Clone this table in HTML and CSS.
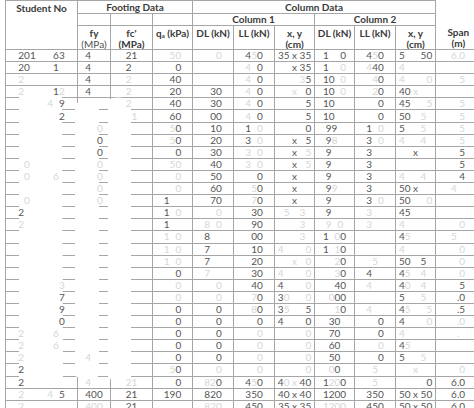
FILE: index.html
```html
<!DOCTYPE html>
<html>
<head>
<meta charset="utf-8">
<link rel="stylesheet" href="styles.css">
</head>
<body>
<div class="page">
<table class="sheet">
<colgroup>
<col class="w-a"><col class="w-b"><col class="w-c"><col class="w-d"><col class="w-e"><col class="w-f"><col class="w-g"><col class="w-h"><col class="w-i"><col class="w-j"><col class="w-k">
</colgroup>
<thead>
<tr class="h1">
<th rowspan="3" class="student">Student No</th>
<th colspan="3">Footing Data</th>
<th colspan="6">Column Data</th>
<th rowspan="3" class="span-h">Span<br>(m)</th>
</tr>
<tr class="h2">
<th></th><th></th><th></th>
<th colspan="3">Column 1</th>
<th colspan="3">Column 2</th>
</tr>
<tr class="h3">
<th>fy<br><span class="light">(MPa)</span></th>
<th>fc'<br>(MPa)</th>
<th>q<sub>a</sub> (kPa)</th>
<th>DL (kN)</th>
<th>LL (kN)</th>
<th>x, y<br>(cm)</th>
<th>DL (kN)</th>
<th>LL (kN)</th>
<th>x, y<br>(cm)</th>
</tr>
</thead>
<tbody>
<tr><td>201<i>504</i>63</td><td>4<i>00</i></td><td>21</td><td><i>1</i><s>50</s></td><td><i>82</i><s>0</s></td><td>4<s>5</s>0</td><td>35 x 35</td><td>1<i>20</i>0</td><td>4<s>5</s>0</td><td>5<i>0 x </i>50</td><td><s>6.0</s></td></tr>
<tr><td>20<i>1504</i>1<i>2</i></td><td>4<i>00</i></td><td>2<i>1</i></td><td><i>15</i>0</td><td></td><td><s>4</s><i>5</i>0</td><td><i>35 </i>x 35</td><td>1<i>20</i><s>0</s></td><td><s>4</s>40</td><td><s>4</s><i>0 x 40</i></td><td></td></tr>
<tr><td><s>2</s><i>0150462</i></td><td>4<i>00</i></td><td><s>2</s><i>1</i></td><td><i>1</i>40</td><td></td><td><s>4</s><i>5</i>0</td><td><i>35 x </i><s>3</s>5</td><td>10<i>0</i><s>0</s></td><td><i>4</i><s>4</s>0</td><td><s>4</s><i>0 x 4</i><s>0</s></td><td><i>5.</i><s>5</s></td></tr>
<tr><td><s>2</s><i>01504</i>1<s>2</s></td><td>4<i>00</i></td><td><s>2</s><i>1</i></td><td><i>1</i>20</td><td><i>9</i>30</td><td><s>4</s><i>5</i>0</td><td><i>40 </i><s>x</s><i> 4</i>0</td><td>10<i>0</i><s>0</s></td><td><i>4</i><s>2</s>0</td><td>40 <s>x</s><i> 40</i></td><td></td></tr>
<tr><td><i>20150</i><s>4</s><i>6</i>9</td><td></td><td><s>2</s><i>1</i></td><td><i>1</i>40</td><td><i>9</i>30</td><td><s>4</s><i>5</i>0</td><td><i>35 x 3</i>5</td><td>10<i>00</i></td><td><i>45</i>0</td><td>45<i> x 4</i><s>5</s></td><td><i>5.</i><s>5</s></td></tr>
<tr><td><i>2015046</i>2</td><td></td><td><i>2</i><s>1</s></td><td><i>1</i>60</td><td><i>1</i>00</td><td><s>4</s><i>5</i>0</td><td><i>35 x 3</i>5</td><td>10<i>00</i></td><td><i>45</i>0</td><td>50<i> x </i><s>5</s><i>0</i></td><td><i>5.</i><s>5</s></td></tr>
<tr><td></td><td><i>40</i><s>0</s></td><td></td><td><i>1</i><s>5</s>0</td><td><i>9</i>10</td><td>1<i>5</i><s>0</s></td><td><i>35 x 3</i>0</td><td>99<i>0</i></td><td>1<i>5</i><s>0</s></td><td>5<i>0 x </i><s>5</s><i>0</i></td><td><i>5.</i><s>5</s></td></tr>
<tr><td></td><td><i>40</i>0</td><td></td><td><i>1</i><s>5</s>0</td><td><i>8</i>20</td><td>3<i>5</i><s>0</s></td><td><i>35 </i>x<i> 3</i>5</td><td>9<s>8</s><i>0</i></td><td>3<i>5</i><s>0</s></td><td><s>4</s><i>0 x </i><s>4</s><i>0</i></td><td><i>5.</i><s>5</s></td></tr>
<tr><td></td><td><i>40</i>0</td><td></td><td><i>15</i>0</td><td><i>8</i>30</td><td><s>3</s><i>5</i><s>0</s></td><td><i>35 </i>x<i> 3</i><s>5</s></td><td>9<i>80</i></td><td>3<i>50</i></td><td><i>40 </i>x<i> 40</i></td><td><i>5.</i>5</td></tr>
<tr><td><i>2</i><s>0</s><i>150463</i></td><td><i>40</i><s>0</s></td><td></td><td><i>1</i><s>50</s></td><td><i>8</i>40</td><td><s>3</s><i>5</i><s>0</s></td><td><i>35 </i>x<i> 3</i><s>5</s></td><td>9<i>80</i></td><td>3<i>50</i></td><td></td><td><i>5.</i>5</td></tr>
<tr><td><i>2</i><s>0</s><i>1504</i><s>6</s><i>3</i></td><td><i>40</i><s>0</s></td><td></td><td><i>15</i><s>0</s></td><td><i>8</i>50</td><td><i>35</i>0</td><td><i>35 </i>x<i> 35</i></td><td>9<i>80</i></td><td>3<i>50</i></td><td><s>4</s><i>0 x </i><s>4</s><i>0</i></td><td><i>5.</i>4</td></tr>
<tr><td></td><td><i>40</i><s>0</s></td><td></td><td><i>15</i><s>0</s></td><td><i>8</i>60</td><td><i>3</i><s>5</s>0</td><td><i>35 </i>x<i> 35</i></td><td>9<s>9</s><i>0</i></td><td>3<i>50</i></td><td>50 x<i> 50</i></td><td><s>4</s><i>.5</i></td></tr>
<tr><td><i>2</i><s>0</s><i>150463</i></td><td><i>40</i><s>0</s></td><td></td><td>1<i>50</i></td><td><i>8</i>70</td><td><i>3</i><s>7</s>0</td><td><i>35 </i>x<i> 35</i></td><td>9<i>90</i></td><td>3<i>5</i><s>0</s></td><td>50<i> x 5</i><s>0</s></td><td></td></tr>
<tr><td>2<i>0150463</i></td><td></td><td></td><td>1<i>5</i><s>0</s></td><td><i>88</i><s>0</s></td><td><i>4</i>30</td><td><i>3</i><s>5</s><i> x </i><s>3</s><i>5</i></td><td>9<i>90</i></td><td><s>3</s><i>50</i></td><td>45<i> x 45</i></td><td></td></tr>
<tr><td><s>2</s><i>0150463</i></td><td></td><td></td><td>1<i>50</i></td><td><s>8</s><i>9</i><s>0</s></td><td><i>4</i>90</td><td><i>35 x </i><s>3</s><i>5</i></td><td><s>9</s><i>9</i><s>0</s></td><td><s>3</s><i>50</i></td><td><s>4</s><i>5 x 45</i></td><td><i>5.</i><s>0</s></td></tr>
<tr><td></td><td></td><td></td><td><s>1</s><i>5</i><s>0</s></td><td>8<i>00</i></td><td><i>5</i>00</td><td><i>35 x </i><s>3</s><i>5</i></td><td>1<i>0</i><s>0</s>0</td><td></td><td>4<s>5</s><i> x 45</i></td><td><s>5</s><i>.5</i></td></tr>
<tr><td></td><td></td><td></td><td><s>1</s><i>5</i><s>0</s></td><td>7<i>00</i></td><td><i>5</i>10</td><td><s>4</s><i>0 x 4</i><s>0</s></td><td>1<i>0</i><s>1</s>0</td><td></td><td><s>4</s><i>0 x 40</i></td><td><i>5.</i><s>0</s></td></tr>
<tr><td></td><td></td><td></td><td><s>1</s><i>5</i><s>0</s></td><td>7<i>10</i></td><td><i>5</i>20</td><td><i>40 </i><s>x</s><i> 4</i><s>0</s></td><td><i>10</i><s>2</s>0</td><td><i>3</i><s>5</s><i>0</i></td><td>50<i> x </i>5<i>0</i></td><td><i>5.</i><s>0</s></td></tr>
<tr><td></td><td></td><td></td><td><i>15</i>0</td><td><s>7</s><i>20</i></td><td><i>5</i>30</td><td><s>4</s><i>0 x 4</i><s>0</s></td><td><i>10</i><s>3</s>0</td><td>4<i>50</i></td><td>4<s>5</s><i> x </i><s>4</s><i>5</i></td><td><i>5.</i><s>0</s></td></tr>
<tr><td><i>2015046</i><s>3</s></td><td></td><td></td><td><i>15</i><s>0</s></td><td><i>73</i><s>0</s></td><td><i>5</i>40</td><td>4<i>0 x 4</i><s>0</s></td><td><i>10</i>40</td><td><s>4</s><i>50</i></td><td>4<s>0</s><i> x </i><s>4</s><i>0</i></td><td><i>5.</i>5</td></tr>
<tr><td><i>2015046</i>7</td><td></td><td></td><td><i>15</i><s>0</s></td><td><i>74</i><s>0</s></td><td><i>5</i><s>7</s>0</td><td>3<s>0</s><i> x 3</i><s>0</s></td><td><i>1</i><s>0</s>00</td><td></td><td>5<i>0 x </i><s>5</s><i>0</i></td><td><i>5</i>.0</td></tr>
<tr><td><i>2015046</i>9</td><td></td><td></td><td><i>15</i>0</td><td><i>75</i>0</td><td><i>5</i><s>8</s>0</td><td>3<s>5</s><i> x 3</i>5</td><td><i>10</i><s>1</s>0</td><td><s>4</s><i>50</i></td><td>4<s>5</s><i> x 4</i><s>5</s></td><td><i>5</i>.5</td></tr>
<tr><td><i>2015046</i>0</td><td></td><td></td><td><i>15</i>0</td><td><i>76</i>0</td><td><i>59</i>0</td><td>4<i>0 x 4</i>0</td><td><i>1</i>30<i>0</i></td><td><i>45</i>0</td><td>4<i>0 x 4</i><s>0</s></td><td><i>5</i><s>.0</s></td></tr>
<tr><td><s>2</s><i>01504</i><s>6</s><i>3</i></td><td></td><td></td><td><i>15</i>0</td><td><i>77</i>0</td><td><i>60</i><s>0</s></td><td><i>40 x 4</i><s>0</s></td><td><i>1</i>70<i>0</i></td><td><i>45</i>0</td><td><s>4</s><i>0 x 40</i></td><td><i>5</i><s>.</s><i>0</i></td></tr>
<tr><td><s>2</s><i>01504</i><s>6</s><i>3</i></td><td></td><td></td><td><i>15</i>0</td><td><i>78</i>0</td><td><i>61</i><s>0</s></td><td><i>40 x 4</i><s>0</s></td><td><i>1</i>60<i>0</i></td><td><i>45</i><s>0</s></td><td>4<s>5</s><i> x 45</i></td><td></td></tr>
<tr><td><s>2</s><i>0150463</i></td><td><s>4</s><i>00</i></td><td></td><td><i>15</i>0</td><td><i>79</i>0</td><td><i>62</i><s>0</s></td><td><i>40 x 4</i><s>0</s></td><td><i>1</i>50<i>0</i></td><td><i>45</i>0</td><td>5<i>0 x </i><s>5</s><i>0</i></td><td></td></tr>
<tr><td>2<i>0150463</i></td><td></td><td></td><td><i>1</i><s>5</s>0</td><td><i>80</i><s>0</s></td><td><i>63</i><s>0</s></td><td><i>40 x 4</i><s>0</s></td><td><i>1</i><s>0</s>0<i>0</i></td><td><i>4</i><s>5</s><i>0</i></td><td><i>50 </i><s>x</s><i> 50</i></td><td><i>6.</i><s>0</s></td></tr>
<tr><td>2<i>0150463</i></td><td><s>4</s><i>00</i></td><td><s>21</s></td><td><i>19</i>0</td><td><s>82</s>0</td><td>4<s>5</s>0</td><td>4<s>0 x </s>40</td><td>1<s>20</s>0</td><td><i>3</i><s>5</s><i>0</i></td><td><i>50 x 5</i>0</td><td>6.0</td></tr>
<tr><td><s>2</s><i>0150</i><s>4</s><i>6</i>5</td><td>400</td><td>21</td><td>190</td><td>820</td><td>350</td><td>40 x 40</td><td>1200</td><td>350</td><td>50 x 50</td><td>6.0</td></tr>
<tr><td><s>2</s><i>0150466</i></td><td><s>400</s></td><td>21</td><td></td><td><s>820</s></td><td>450</td><td>35 x 35</td><td><s>1200</s></td><td>450</td><td>50 x 50</td><td>6.0</td></tr>
</tbody>
</table>
<svg class="smudge" width="474" height="408" viewBox="0 0 474 408" aria-hidden="true">
<path d="M19 90 C 30 86, 50 88, 62 92 L 63 380 C 50 386, 30 385, 19 381 Z" fill="#ffffff"/>
<path d="M75 104 C 82 100, 94 101, 99 104 L 99 376 C 92 380, 82 380, 75 376 Z" fill="#ffffff"/>
<path d="M108 100 C 114 96, 126 97, 131 101 L 131 378 C 124 382, 114 382, 108 378 Z" fill="#ffffff"/>
</svg>
</div>
</body>
</html>
```
FILE: styles.css
```css
html, body {
  margin: 0;
  padding: 0;
  background: #ffffff;
  overflow: hidden;
}

.page {
  position: relative;
  width: 474px;
  height: 408px;
  overflow: hidden;
}

.smudge {
  position: absolute;
  left: 0;
  top: 0;
  z-index: 1;
  pointer-events: none;
}

.sheet {
  border-collapse: collapse;
  table-layout: fixed;
  width: 475px;
  margin-left: 5px;
  font-family: Lato, "Open Sans", "Liberation Sans", sans-serif;
}

.w-a { width: 72px; }
.w-b { width: 33px; }
.w-c { width: 42px; }
.w-d { width: 40px; }
.w-e { width: 41px; }
.w-f { width: 41px; }
.w-g { width: 40px; }
.w-h { width: 40px; }
.w-i { width: 41px; }
.w-j { width: 40px; }
.w-k { width: 45px; }

.sheet th,
.sheet td {
  border: 1px solid #a6a6a6;
  padding: 0;
  text-align: center;
  white-space: nowrap;
  overflow: hidden;
}

.sheet th {
  font-size: 10px;
  font-weight: 700;
  color: #3a3a3a;
  line-height: 10.5px;
  vertical-align: middle;
}

.sheet .h1 { height: 13px; }
.sheet .h2 { height: 12px; }
.sheet .h3 { height: 24px; }

.sheet .h3 th {
  vertical-align: top;
  padding-top: 2px;
}

.sheet .student {
  vertical-align: top;
  padding-top: 1px;
  line-height: 12px;
}

.sheet .span-h {
  border-top: hidden;
  border-right: hidden;
  vertical-align: bottom;
  padding-bottom: 1px;
}

.sheet .light {
  font-weight: 400;
  color: #505050;
}

.sheet sub {
  font-size: 6px;
  vertical-align: -1px;
  line-height: 0;
}

.sheet tbody tr { height: 12.1px; }

.sheet td {
  position: relative;
  z-index: 2;
  font-size: 10px;
  line-height: 11px;
  color: #555555;
  vertical-align: middle;
}

.sheet i {
  font-style: normal;
  color: transparent;
}

.sheet s {
  text-decoration: none;
  color: #d6d6d6;
}
```
